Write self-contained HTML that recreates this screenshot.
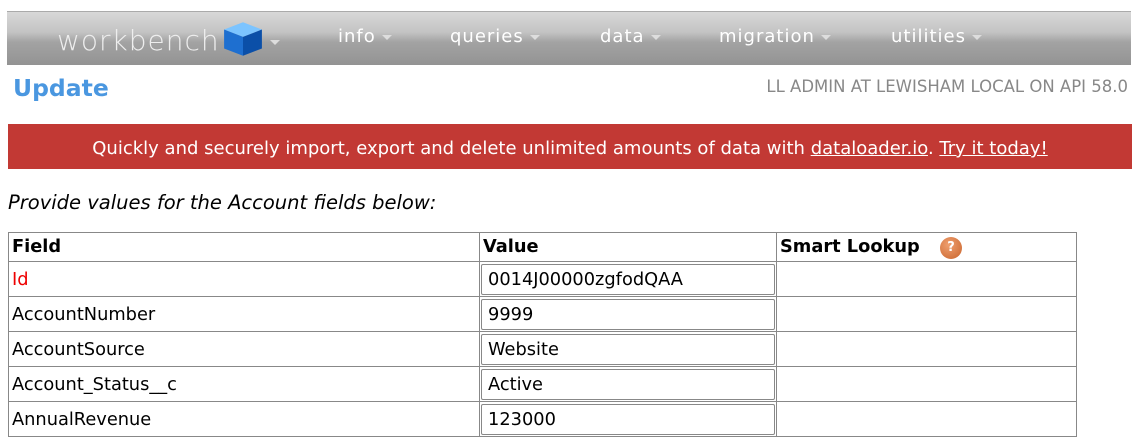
<!DOCTYPE html>
<html><head><style>
body{margin:0;width:1138px;height:438px;overflow:hidden;background:#fff;font-family:Verdana,"DejaVu Sans",sans-serif;}
#nav{position:absolute;left:7px;top:11px;width:1124px;height:53px;background:linear-gradient(#d8d8d8 0,#c4c4c4 20px,#a3a3a3 30px,#939393 53px);border-top:1px solid #aaa;}
.n{position:absolute;top:14px;color:#fff;font-size:18px;letter-spacing:1px;}
.ar{display:inline-block;width:0;height:0;border-left:5px solid transparent;border-right:5px solid transparent;border-top:5px solid #ddd;margin-left:6px;vertical-align:middle}
#logo{position:absolute;left:50px;top:8px;color:#eee;font-size:28px;font-family:"DejaVu Sans",sans-serif;font-weight:300;letter-spacing:1px}
h1{position:absolute;left:13px;top:74px;margin:0;font-size:23.5px;color:#4a97e0;font-weight:bold}
#who{position:absolute;right:10px;top:77px;font-size:16.5px;color:#888}
#ban{position:absolute;left:8px;top:124px;width:1124px;height:45px;background:#c23934;color:#fff;font-size:18px;text-align:center;line-height:49px}
#ban u{color:#fff}
#prov{position:absolute;left:8px;top:191px;font-style:italic;font-size:19.5px;color:#000}
table{position:absolute;left:8px;top:232px;border-collapse:collapse;font-size:17.8px}
td{border:1px solid #888;height:35px;padding:0 3px;vertical-align:middle;box-sizing:border-box}
tr.h td{height:29px;font-weight:bold;vertical-align:top;padding-top:3px;padding-bottom:0;line-height:22px}
.inp{border:1px solid #888;border-radius:2px;height:31px;line-height:30px;padding-left:6px;box-sizing:border-box;margin:1px -2px 0 -2px}
.q{display:inline-block;width:22px;height:22px;border-radius:50%;background:radial-gradient(circle at 40% 35%,#f0a070,#c8642c);color:#fff;font-size:13px;text-align:center;line-height:22px;margin-left:14px;vertical-align:top;position:relative;top:1px}
</style></head><body>
<div id="nav">
<div id="logo">workbench<svg width="42" height="38" viewBox="0 0 40 36" style="vertical-align:-8px;margin-left:2px"><polygon points="20,2 38,9 20,16 2,9" fill="#7cc4ff"/><polygon points="2,9 20,16 20,34 2,27" fill="#1e6fd0"/><polygon points="20,16 38,9 38,27 20,34" fill="#0b4fa8"/></svg><span class="ar"></span></div>
<div class="n" style="left:331px">info<span class="ar"></span></div>
<div class="n" style="left:443px">queries<span class="ar"></span></div>
<div class="n" style="left:593px">data<span class="ar"></span></div>
<div class="n" style="left:712px">migration<span class="ar"></span></div>
<div class="n" style="left:884px">utilities<span class="ar"></span></div>
</div>
<h1>Update</h1>
<div id="who">LL ADMIN AT LEWISHAM LOCAL ON API 58.0</div>
<div id="ban">Quickly and securely import, export and delete unlimited amounts of data with <u>dataloader.io</u>. <u>Try it today!</u></div>
<div id="prov">Provide values for the Account fields below:</div>
<table>
<tr class="h"><td style="width:471px">Field</td><td style="width:297px">Value</td><td style="width:300px">Smart Lookup <span class="q">?</span></td></tr>
<tr><td style="color:#e00">Id</td><td><div class="inp">0014J00000zgfodQAA</div></td><td></td></tr>
<tr><td>AccountNumber</td><td><div class="inp">9999</div></td><td></td></tr>
<tr><td>AccountSource</td><td><div class="inp">Website</div></td><td></td></tr>
<tr><td>Account_Status__c</td><td><div class="inp">Active</div></td><td></td></tr>
<tr><td>AnnualRevenue</td><td><div class="inp">123000</div></td><td></td></tr>
</table>
</body></html>
